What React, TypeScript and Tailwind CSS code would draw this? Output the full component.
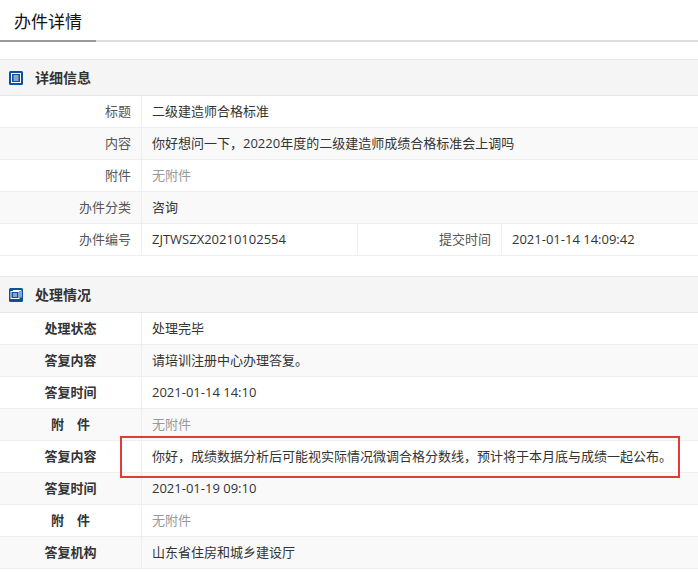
const font = { fontFamily: '"Open Sans","Noto Sans CJK SC",sans-serif' };

function Icon({ kind }: { kind: 'list' | 'doc' }) {
  return (
    <svg width="14" height="14" viewBox="0 0 14 14">
      <rect x="0" y="0" width="14" height="14" rx="1.5" fill="#0b4ea2" />
      {kind === 'list' ? (
        <>
          <rect x="2.5" y="2.5" width="9" height="9" fill="none" stroke="#fff" strokeWidth="1" />
          <path d="M4.5 5h5M4.5 7h5M4.5 9h5" stroke="#fff" strokeWidth="1" />
        </>
      ) : (
        <>
          <rect x="2" y="3.5" width="8" height="7" fill="none" stroke="#fff" strokeWidth="1" />
          <path d="M4 2.5h8v7M4 6h4M4 8h4" stroke="#fff" strokeWidth="1" fill="none" />
        </>
      )}
    </svg>
  );
}

function Header({ title, kind }: { title: string; kind: 'list' | 'doc' }) {
  return (
    <div className="flex h-[37px] items-center gap-[12px] border-y border-[#e8e8e8] bg-[#f5f5f5] pl-[9px] text-[14px] font-bold text-[#333]">
      <Icon kind={kind} />
      {title}
    </div>
  );
}

function Row({ label, value, i, center, muted }: { label: string; value: string; i: number; center?: boolean; muted?: boolean }) {
  return (
    <div className={`flex h-[32px] border-b border-[#eee] text-[13px] ${i % 2 ? 'bg-[#f9f9f9]' : 'bg-white'}`}>
      <div className={`flex w-[142px] shrink-0 items-center border-r border-[#eee] ${center ? 'justify-center font-bold text-[#333]' : 'justify-end pr-[10px] text-[#555]'}`}>{label}</div>
      <div className={`flex items-center pl-[10px] ${muted ? 'text-[#999]' : 'text-[#333]'}`}>{value}</div>
    </div>
  );
}

export default function App() {
  const rows2: [string, string, boolean?][] = [
    ['处理状态', '处理完毕'],
    ['答复内容', '请培训注册中心办理答复。'],
    ['答复时间', '2021-01-14 14:10'],
    ['附　件', '无附件', true],
    ['答复内容', '你好，成绩数据分析后可能视实际情况微调合格分数线，预计将于本月底与成绩一起公布。'],
    ['答复时间', '2021-01-19 09:10'],
    ['附　件', '无附件', true],
    ['答复机构', '山东省住房和城乡建设厅'],
  ];
  return (
    <div className="w-[698px] bg-white" style={font}>
      <div className="relative h-[42px] border-b-2 border-[#ddd]">
        <div className="absolute bottom-[-2px] left-0 flex h-[42px] w-[96px] items-end justify-center border-b-2 border-[#999] pb-[6px] text-[17px] text-[#111]">办件详情</div>
      </div>
      <div className="h-[17px]" />
      <Header title="详细信息" kind="list" />
      <Row i={0} label="标题" value="二级建造师合格标准" />
      <Row i={1} label="内容" value="你好想问一下，20220年度的二级建造师成绩合格标准会上调吗" />
      <Row i={0} label="附件" value="无附件" muted />
      <Row i={1} label="办件分类" value="咨询" />
      <div className="flex h-[32px] border-b border-[#eee] text-[13px]">
        <div className="flex w-[142px] items-center justify-end border-r border-[#eee] pr-[10px] text-[#555]">办件编号</div>
        <div className="flex w-[216px] items-center border-r border-[#eee] pl-[10px] text-[#333]">ZJTWSZX20210102554</div>
        <div className="flex w-[144px] items-center justify-end border-r border-[#eee] pr-[10px] text-[#555]">提交时间</div>
        <div className="flex items-center pl-[10px] text-[#333]">2021-01-14 14:09:42</div>
      </div>
      <div className="h-[20px]" />
      <Header title="处理情况" kind="doc" />
      {rows2.map(([l, v, m], i) =>
        i === 4 ? (
          <div key={i} className="relative">
            <Row i={i} label={l} value={v} center muted={m} />
            <div className="absolute left-[120px] top-[-5px] h-[42px] w-[560px] border-2 border-[#e53935]" />
          </div>
        ) : (
          <Row key={i} i={i} label={l} value={v} center muted={m} />
        )
      )}
    </div>
  );
}
